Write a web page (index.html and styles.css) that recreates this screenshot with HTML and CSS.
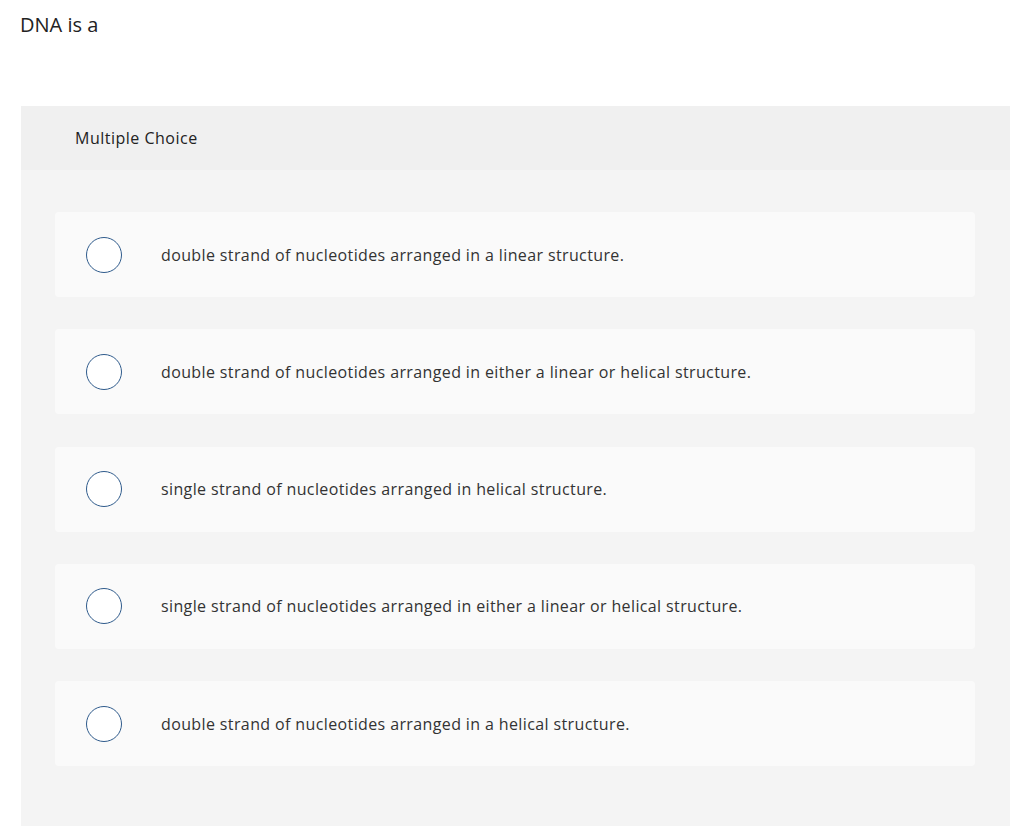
FILE: index.html
```html
<!DOCTYPE html>
<html>
<head>
<meta charset="utf-8">
<link rel="stylesheet" href="styles.css">
</head>
<body>
<div class="question">DNA is a</div>
<div class="panel">
  <div class="panel-head">Multiple Choice</div>
  <div class="choices">
    <div class="choice"><span class="radio"></span><span class="label">double strand of nucleotides arranged in a linear structure.</span></div>
    <div class="choice"><span class="radio"></span><span class="label">double strand of nucleotides arranged in either a linear or helical structure.</span></div>
    <div class="choice"><span class="radio"></span><span class="label">single strand of nucleotides arranged in helical structure.</span></div>
    <div class="choice"><span class="radio"></span><span class="label">single strand of nucleotides arranged in either a linear or helical structure.</span></div>
    <div class="choice"><span class="radio"></span><span class="label">double strand of nucleotides arranged in a helical structure.</span></div>
  </div>
</div>
</body>
</html>
```
FILE: styles.css
```css
html, body {
  margin: 0;
  padding: 0;
  background: #fff;
  font-family: "Open Sans", Lato, sans-serif;
  color: #333;
}
.question {
  padding: 12px 20px 0 20px;
  height: 106px;
  box-sizing: border-box;
  font-size: 20px;
  line-height: 26px;
  color: #222;
}
.panel {
  margin-left: 21px;
  width: 989px;
  background: #f4f4f4;
  min-height: 730px;
}
.panel-head {
  background: #f0f0f0;
  height: 64px;
  box-sizing: border-box;
  padding-left: 54px;
  display: flex;
  align-items: center;
  font-size: 16px;
  letter-spacing: 0.5px;
  color: #222;
}
.choices {
  display: flex;
  flex-direction: column;
  gap: 32.3px;
  padding: 42px 35px 60px 34px;
}
.choice {
  background: #fafafa;
  border-radius: 4px;
  height: 85px;
  display: flex;
  align-items: center;
  padding-left: 31px;
}
.radio {
  width: 34px;
  height: 34px;
  border: 1.5px solid #2f5b8c;
  border-radius: 50%;
  background: #fff;
  flex: none;
}
.label {
  margin-left: 39px;
  font-size: 16px;
  letter-spacing: 0.38px;
  color: #333;
}
```
